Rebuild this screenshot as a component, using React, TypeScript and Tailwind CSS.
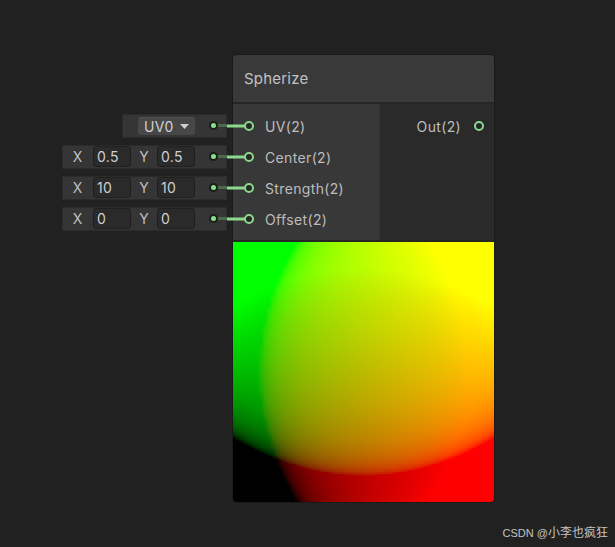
import React, { useMemo } from 'react';

const W = 261;
const H = 260;

// linear -> sRGB, like the shader preview does
const enc = (c: number) => {
  const v = Math.min(1, Math.max(0, c));
  const s = v <= 0.0031308 ? 12.92 * v : 1.055 * Math.pow(v, 1 / 2.4) - 0.055;
  return Math.round(s * 255);
};

function SpherizePreview() {
  const rows = useMemo(() => {
    const list: { y: number; stops: { o: number; c: string }[] }[] = [];
    for (let y = 0; y < H; y += 2) {
      const v = 1 - (y + 1) / H;
      const stops: { o: number; c: string }[] = [];
      for (let i = 0; i <= 65; i++) {
        const u = i / 65;
        const dx = u - 0.5;
        const dy = v - 0.5;
        const d2 = dx * dx + dy * dy;
        const k = d2 * d2 * 10;
        stops.push({ o: u, c: `rgb(${enc(u + dx * k)},${enc(v + dy * k)},0)` });
      }
      list.push({ y, stops });
    }
    return list;
  }, []);

  return (
    <svg width={W} height={H} viewBox={`0 0 ${W} ${H}`} className="block">
      <defs>
        {rows.map((r) => (
          <linearGradient key={r.y} id={`sp${r.y}`} x1="0" x2="1" y1="0" y2="0">
            {r.stops.map((s, i) => (
              <stop key={i} offset={s.o} stopColor={s.c} />
            ))}
          </linearGradient>
        ))}
      </defs>
      {rows.map((r) => (
        <rect key={r.y} x={0} y={r.y} width={W} height={2} fill={`url(#sp${r.y})`} shapeRendering="crispEdges" />
      ))}
    </svg>
  );
}

function Connector() {
  return (
    <>
      <div className="ml-[14px] w-[9px] h-[9px] rounded-full bg-[#1d1d1d] flex items-center justify-center shrink-0">
        <div className="w-[5px] h-[5px] rounded-full bg-[#86e286]" />
      </div>
      <div className="w-[9px] h-[3px] bg-[#4b6a4b] shrink-0" />
      <div className="absolute left-full top-1/2 -translate-y-1/2 w-[18px] h-[3px] bg-[#8cd88c] z-10" />
    </>
  );
}

function NumberBox({ value }: { value: string }) {
  return (
    <div className="w-[38px] h-[21px] rounded-[3px] bg-[#2a2a2a] border border-[#202020] pl-[3px] flex items-center text-[14px] tracking-[0.3px] text-[#cfcfcf]">
      {value}
    </div>
  );
}

function VectorField({ x, y }: { x: string; y: string }) {
  return (
    <div className="relative w-[165px] h-[24px] flex items-center bg-[#353535] shadow-[inset_0_0_0_1px_#2b2b2b]">
      <span className="w-[31px] text-center text-[14px] text-[#bfbfbf]">X</span>
      <NumberBox value={x} />
      <span className="w-[26px] text-center text-[14px] text-[#bfbfbf]">Y</span>
      <NumberBox value={y} />
      <Connector />
    </div>
  );
}

function Port({ label }: { label: string }) {
  return (
    <div className="h-[31px] flex items-center pl-[11px]">
      <div className="w-[10px] h-[10px] rounded-full border-2 border-[#8cd88c] bg-[#262626] shrink-0" />
      <span className="ml-[11px] pt-[2px] text-[14px] tracking-[0.35px] text-[#bdbdbd]">{label}</span>
    </div>
  );
}

export default function App() {
  return (
    <div
      className="relative w-[615px] h-[547px] bg-[#212121] flex flex-col overflow-hidden"
      style={{ fontFamily: 'Inter, "Noto Sans", sans-serif' }}
    >
      <div className="flex pt-[55px] pl-[62px]">
        {/* Inline input fields */}
        <div className="w-[171px] pt-[55px] pr-[6px] flex flex-col items-end">
          <div className="h-[31px] flex items-center">
            <div className="relative w-[105px] h-[24px] flex items-center bg-[#353535] shadow-[inset_0_0_0_1px_#2b2b2b] pl-[16px]">
              <div className="w-[57px] h-[18px] rounded-[3px] bg-[#474747] border-t border-[#515151] flex items-center pl-[6px] text-[14px] tracking-[0.3px] text-[#d0d0d0]">
                UV0
                <svg width="9" height="5" viewBox="0 0 9 5" className="ml-[6px]">
                  <path d="M0 0H9L4.5 5Z" fill="#cfcfcf" />
                </svg>
              </div>
              <Connector />
            </div>
          </div>
          <div className="h-[31px] flex items-center">
            <VectorField x="0.5" y="0.5" />
          </div>
          <div className="h-[31px] flex items-center">
            <VectorField x="10" y="10" />
          </div>
          <div className="h-[31px] flex items-center">
            <VectorField x="0" y="0" />
          </div>
        </div>

        {/* Node */}
        <div className="w-[261px] rounded-[4px] bg-[#262626] shadow-[0_0_0_1px_#1a1a1a]">
          <div className="h-[47px] bg-[#393939] rounded-t-[4px] flex items-center pl-[11px] pt-[2px] text-[15px] tracking-[0.2px] text-[#c2c2c2]">
            Spherize
          </div>
          <div className="h-[2px] bg-[#262626]" />
          <div className="h-[136px] flex">
            <div className="w-[148px] bg-[#383838] border-r-2 border-[#2f2f2f] py-[6px]">
              <Port label="UV(2)" />
              <Port label="Center(2)" />
              <Port label="Strength(2)" />
              <Port label="Offset(2)" />
            </div>
            <div className="flex-1 bg-[#2a2a2a] pt-[6px]">
              <div className="h-[31px] flex items-center justify-end pr-[10px]">
                <span className="pt-[2px] text-[14px] tracking-[0.35px] text-[#bdbdbd]">Out(2)</span>
                <div className="ml-[13px] w-[10px] h-[10px] rounded-full border-2 border-[#8cd88c] bg-[#262626]" />
              </div>
            </div>
          </div>
          <div className="h-[2px] bg-[#262626]" />
          <div className="rounded-b-[4px] overflow-hidden">
            <SpherizePreview />
          </div>
        </div>
      </div>

      <div
        className="mt-auto pb-[5px] pr-[7px] text-right text-[12px] text-[#c4c4c4]"
        style={{ fontFamily: '"Liberation Sans", "Noto Sans CJK SC", sans-serif' }}
      >
        <span className="text-[11px]">CSDN @</span>小李也疯狂
      </div>
    </div>
  );
}
